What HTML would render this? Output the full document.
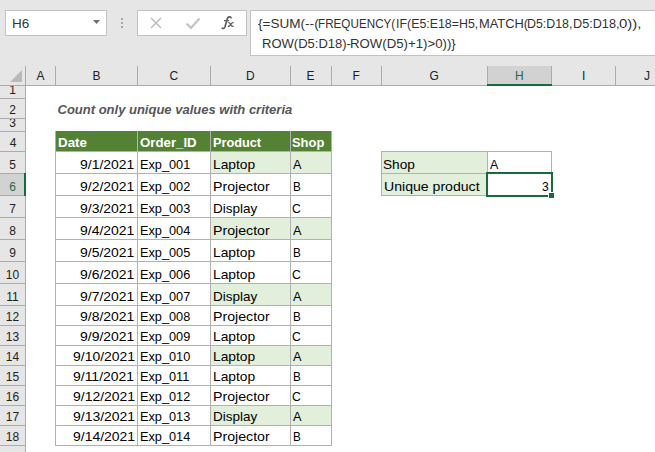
<!DOCTYPE html>
<html><head><meta charset="utf-8"><style>
html,body{margin:0;padding:0;width:655px;height:452px;overflow:hidden;background:#fff;}
body{position:relative;font-family:"Liberation Sans",sans-serif;}
.t{position:absolute;white-space:pre;line-height:1;font-family:"Liberation Sans",sans-serif;}
</style></head><body>
<div style="position:absolute;left:0px;top:0px;width:655px;height:86px;background:#e6e6e6;"></div>
<div style="position:absolute;left:0px;top:86px;width:26px;height:366px;background:#e6e6e6;"></div>
<div style="position:absolute;left:5px;top:10px;width:102px;height:26px;background:#fff;border:1px solid #c2c2c2;box-sizing:border-box;"></div>
<svg style="position:absolute;left:0px;top:0px" width="120" height="40"><path d="M93 20 L100 20 L96.5 24 Z" fill="#6f6f6f"/></svg>
<div style="position:absolute;left:121px;top:18px;width:2px;height:2px;background:#a9a9a9;"></div>
<div style="position:absolute;left:121px;top:22px;width:2px;height:2px;background:#a9a9a9;"></div>
<div style="position:absolute;left:121px;top:26px;width:2px;height:2px;background:#a9a9a9;"></div>
<div style="position:absolute;left:137px;top:10px;width:110px;height:26px;background:#fff;border:1px solid #c2c2c2;box-sizing:border-box;"></div>
<svg style="position:absolute;left:148px;top:15px" width="16" height="16"><path d="M3 3 L13 13 M13 3 L3 13" stroke="#bdbdbd" stroke-width="1.5"/></svg>
<svg style="position:absolute;left:184px;top:15px" width="18" height="16"><path d="M2.5 8.5 L7 13 L15.5 3.5" stroke="#c4c4c4" stroke-width="2.2" fill="none"/></svg>
<svg style="position:absolute;left:0px;top:0px" width="250" height="40"><path d="M231 17.6 C230 16.4 228 16.6 227.3 18.8 L225 26.8 C224.5 28.4 223.5 28.9 222.3 28.2" stroke="#5c5c5c" stroke-width="1.7" fill="none" stroke-linecap="round"/><path d="M224 20.7 L229.2 20.7" stroke="#5c5c5c" stroke-width="1.2"/><path d="M228.2 22.6 C229.5 22.2 230 23.5 230.6 24.6 C231.2 25.8 232 26.6 233.6 26.2 M233.6 22.4 C232.5 22.6 231 24 230.6 24.6 C230 25.5 229 26.6 227.8 26.5" stroke="#5c5c5c" stroke-width="1.3" fill="none"/></svg>
<div style="position:absolute;left:250px;top:10px;width:420px;height:46px;background:#fff;border:1px solid #c2c2c2;box-sizing:border-box;"></div>
<div style="position:absolute;left:25px;top:66px;width:1px;height:19px;background:#ababab;"></div>
<div style="position:absolute;left:55px;top:66px;width:1px;height:19px;background:#ababab;"></div>
<div style="position:absolute;left:137px;top:66px;width:1px;height:19px;background:#ababab;"></div>
<div style="position:absolute;left:210px;top:66px;width:1px;height:19px;background:#ababab;"></div>
<div style="position:absolute;left:290px;top:66px;width:1px;height:19px;background:#ababab;"></div>
<div style="position:absolute;left:331px;top:66px;width:1px;height:19px;background:#ababab;"></div>
<div style="position:absolute;left:381px;top:66px;width:1px;height:19px;background:#ababab;"></div>
<div style="position:absolute;left:487px;top:66px;width:1px;height:19px;background:#ababab;"></div>
<div style="position:absolute;left:551px;top:66px;width:1px;height:19px;background:#ababab;"></div>
<div style="position:absolute;left:615px;top:66px;width:1px;height:19px;background:#ababab;"></div>
<div style="position:absolute;left:488px;top:66px;width:63px;height:18px;background:#d2d2d2;"></div>
<div style="position:absolute;left:0px;top:85px;width:655px;height:1px;background:#ababab;"></div>
<div style="position:absolute;left:487px;top:84px;width:65px;height:2px;background:#166b3a;"></div>
<div style="position:absolute;left:25px;top:85px;width:1px;height:367px;background:#ababab;"></div>
<div style="position:absolute;left:0px;top:98px;width:25px;height:1px;background:#ababab;"></div>
<div style="position:absolute;left:0px;top:118px;width:25px;height:1px;background:#ababab;"></div>
<div style="position:absolute;left:0px;top:131px;width:25px;height:1px;background:#ababab;"></div>
<div style="position:absolute;left:0px;top:151px;width:25px;height:1px;background:#ababab;"></div>
<div style="position:absolute;left:0px;top:173px;width:25px;height:1px;background:#ababab;"></div>
<div style="position:absolute;left:0px;top:195px;width:25px;height:1px;background:#ababab;"></div>
<div style="position:absolute;left:0px;top:217px;width:25px;height:1px;background:#ababab;"></div>
<div style="position:absolute;left:0px;top:239px;width:25px;height:1px;background:#ababab;"></div>
<div style="position:absolute;left:0px;top:261px;width:25px;height:1px;background:#ababab;"></div>
<div style="position:absolute;left:0px;top:283px;width:25px;height:1px;background:#ababab;"></div>
<div style="position:absolute;left:0px;top:305px;width:25px;height:1px;background:#ababab;"></div>
<div style="position:absolute;left:0px;top:325px;width:25px;height:1px;background:#ababab;"></div>
<div style="position:absolute;left:0px;top:345px;width:25px;height:1px;background:#ababab;"></div>
<div style="position:absolute;left:0px;top:365px;width:25px;height:1px;background:#ababab;"></div>
<div style="position:absolute;left:0px;top:385px;width:25px;height:1px;background:#ababab;"></div>
<div style="position:absolute;left:0px;top:405px;width:25px;height:1px;background:#ababab;"></div>
<div style="position:absolute;left:0px;top:425px;width:25px;height:1px;background:#ababab;"></div>
<div style="position:absolute;left:0px;top:445px;width:25px;height:1px;background:#ababab;"></div>
<div style="position:absolute;left:0px;top:174px;width:24px;height:21px;background:#d2d2d2;"></div>
<div style="position:absolute;left:24px;top:173px;width:2px;height:23px;background:#166b3a;"></div>
<svg style="position:absolute;left:10px;top:70px" width="13" height="13"><path d="M12 0 L12 12 L0 12 Z" fill="#b9b9b9"/></svg>
<div style="position:absolute;left:26px;top:86px;width:629px;height:366px;background:#fff;"></div>
<div style="position:absolute;left:56px;top:131px;width:275px;height:20px;background:#548235;"></div>
<div style="position:absolute;left:211px;top:152px;width:120px;height:21px;background:#e2efda;"></div>
<div style="position:absolute;left:211px;top:218px;width:120px;height:21px;background:#e2efda;"></div>
<div style="position:absolute;left:211px;top:284px;width:120px;height:21px;background:#e2efda;"></div>
<div style="position:absolute;left:211px;top:346px;width:120px;height:19px;background:#e2efda;"></div>
<div style="position:absolute;left:211px;top:406px;width:120px;height:19px;background:#e2efda;"></div>
<div style="position:absolute;left:55px;top:131px;width:1px;height:315px;background:#b1b1b1;"></div>
<div style="position:absolute;left:137px;top:131px;width:1px;height:315px;background:#b1b1b1;"></div>
<div style="position:absolute;left:210px;top:131px;width:1px;height:315px;background:#b1b1b1;"></div>
<div style="position:absolute;left:290px;top:131px;width:1px;height:315px;background:#b1b1b1;"></div>
<div style="position:absolute;left:331px;top:131px;width:1px;height:315px;background:#b1b1b1;"></div>
<div style="position:absolute;left:55px;top:151px;width:277px;height:1px;background:#b1b1b1;"></div>
<div style="position:absolute;left:55px;top:173px;width:277px;height:1px;background:#b1b1b1;"></div>
<div style="position:absolute;left:55px;top:195px;width:277px;height:1px;background:#b1b1b1;"></div>
<div style="position:absolute;left:55px;top:217px;width:277px;height:1px;background:#b1b1b1;"></div>
<div style="position:absolute;left:55px;top:239px;width:277px;height:1px;background:#b1b1b1;"></div>
<div style="position:absolute;left:55px;top:261px;width:277px;height:1px;background:#b1b1b1;"></div>
<div style="position:absolute;left:55px;top:283px;width:277px;height:1px;background:#b1b1b1;"></div>
<div style="position:absolute;left:55px;top:305px;width:277px;height:1px;background:#b1b1b1;"></div>
<div style="position:absolute;left:55px;top:325px;width:277px;height:1px;background:#b1b1b1;"></div>
<div style="position:absolute;left:55px;top:345px;width:277px;height:1px;background:#b1b1b1;"></div>
<div style="position:absolute;left:55px;top:365px;width:277px;height:1px;background:#b1b1b1;"></div>
<div style="position:absolute;left:55px;top:385px;width:277px;height:1px;background:#b1b1b1;"></div>
<div style="position:absolute;left:55px;top:405px;width:277px;height:1px;background:#b1b1b1;"></div>
<div style="position:absolute;left:55px;top:425px;width:277px;height:1px;background:#b1b1b1;"></div>
<div style="position:absolute;left:55px;top:445px;width:277px;height:1px;background:#b1b1b1;"></div>
<div style="position:absolute;left:382px;top:152px;width:105px;height:43px;background:#e2efda;"></div>
<div style="position:absolute;left:381px;top:151px;width:1px;height:45px;background:#b1b1b1;"></div>
<div style="position:absolute;left:487px;top:151px;width:1px;height:45px;background:#b1b1b1;"></div>
<div style="position:absolute;left:551px;top:151px;width:1px;height:45px;background:#b1b1b1;"></div>
<div style="position:absolute;left:381px;top:151px;width:171px;height:1px;background:#b1b1b1;"></div>
<div style="position:absolute;left:381px;top:173px;width:171px;height:1px;background:#b1b1b1;"></div>
<div style="position:absolute;left:381px;top:195px;width:171px;height:1px;background:#b1b1b1;"></div>
<div style="position:absolute;left:486px;top:172px;width:67px;height:25px;border:2px solid #166b3a;box-sizing:border-box;"></div>
<div style="position:absolute;left:548px;top:192px;width:7px;height:7px;background:#fff;"></div>
<div style="position:absolute;left:549px;top:193px;width:5px;height:5px;background:#166b3a;"></div>
<div class="t" style="left:11.82px;top:18.21px;font-size:12.5px;transform:scaleX(1.0786);transform-origin:0 0;color:#333;">H6</div>
<div class="t" style="left:257.50px;top:16.99px;font-size:13px;transform:scaleX(1.0431);transform-origin:0 0;color:#333;">{=SUM(--(</div>
<div class="t" style="left:317.60px;top:16.99px;font-size:13px;transform:scaleX(0.8988);transform-origin:0 0;color:#333;">FREQUENCY(</div>
<div class="t" style="left:395.55px;top:16.99px;font-size:13px;transform:scaleX(0.9524);transform-origin:0 0;color:#333;">IF(E5:E18=H5,</div>
<div class="t" style="left:478.51px;top:16.99px;font-size:13px;transform:scaleX(0.9896);transform-origin:0 0;color:#333;">MATCH(</div>
<div class="t" style="left:527.25px;top:16.99px;font-size:13px;transform:scaleX(0.9522);transform-origin:0 0;color:#333;">D5:D18,</div>
<div class="t" style="left:573.03px;top:16.99px;font-size:13px;transform:scaleX(0.9739);transform-origin:0 0;color:#333;">D5:D18,</div>
<div class="t" style="left:618.65px;top:16.99px;font-size:13px;transform:scaleX(1.1500);transform-origin:0 0;color:#333;">0)),</div>
<div class="t" style="left:261.90px;top:36.99px;font-size:13px;transform:scaleX(1.0011);transform-origin:0 0;color:#333;">ROW(D5:D18)-</div>
<div class="t" style="left:349.88px;top:36.99px;font-size:13px;transform:scaleX(1.0165);transform-origin:0 0;color:#333;">ROW(D5)+1)&gt;0))}</div>
<div class="t" style="left:57.50px;top:102.99px;font-size:13px;transform:scaleX(1.0000);transform-origin:0 0;color:#555659;font-weight:bold;font-style:italic;">Count only unique values with criteria</div>
<div class="t" style="left:57.77px;top:135.99px;font-size:13px;transform:scaleX(1.0296);transform-origin:0 0;color:#fff;font-weight:bold;">Date</div>
<div class="t" style="left:140.00px;top:135.99px;font-size:13px;transform:scaleX(1.0182);transform-origin:0 0;color:#fff;font-weight:bold;">Order_ID</div>
<div class="t" style="left:213.32px;top:135.99px;font-size:13px;transform:scaleX(0.9792);transform-origin:0 0;color:#fff;font-weight:bold;">Product</div>
<div class="t" style="left:291.91px;top:135.99px;font-size:13px;transform:scaleX(0.9935);transform-origin:0 0;color:#fff;font-weight:bold;">Shop</div>
<div class="t" style="left:80.43px;top:157.99px;font-size:13px;transform:scaleX(1.0735);transform-origin:0 0;color:#000;">9/1/2021</div>
<div class="t" style="left:139.52px;top:157.99px;font-size:13px;transform:scaleX(0.9800);transform-origin:0 0;color:#000;">Exp_001</div>
<div class="t" style="left:212.94px;top:157.99px;font-size:13px;transform:scaleX(1.0605);transform-origin:0 0;color:#000;">Laptop</div>
<div class="t" style="left:293.20px;top:157.99px;font-size:13px;transform:scaleX(0.9778);transform-origin:0 0;color:#000;">A</div>
<div class="t" style="left:80.43px;top:179.99px;font-size:13px;transform:scaleX(1.0735);transform-origin:0 0;color:#000;">9/2/2021</div>
<div class="t" style="left:139.52px;top:179.99px;font-size:13px;transform:scaleX(0.9800);transform-origin:0 0;color:#000;">Exp_002</div>
<div class="t" style="left:212.91px;top:179.99px;font-size:13px;transform:scaleX(1.0902);transform-origin:0 0;color:#000;">Projector</div>
<div class="t" style="left:293.10px;top:179.99px;font-size:13px;transform:scaleX(0.9000);transform-origin:0 0;color:#000;">B</div>
<div class="t" style="left:80.43px;top:201.99px;font-size:13px;transform:scaleX(1.0735);transform-origin:0 0;color:#000;">9/3/2021</div>
<div class="t" style="left:139.52px;top:201.99px;font-size:13px;transform:scaleX(0.9800);transform-origin:0 0;color:#000;">Exp_003</div>
<div class="t" style="left:212.96px;top:201.99px;font-size:13px;transform:scaleX(1.0405);transform-origin:0 0;color:#000;">Display</div>
<div class="t" style="left:292.36px;top:201.99px;font-size:13px;transform:scaleX(0.9375);transform-origin:0 0;color:#000;">C</div>
<div class="t" style="left:80.43px;top:223.99px;font-size:13px;transform:scaleX(1.0735);transform-origin:0 0;color:#000;">9/4/2021</div>
<div class="t" style="left:139.52px;top:223.99px;font-size:13px;transform:scaleX(0.9800);transform-origin:0 0;color:#000;">Exp_004</div>
<div class="t" style="left:212.91px;top:223.99px;font-size:13px;transform:scaleX(1.0902);transform-origin:0 0;color:#000;">Projector</div>
<div class="t" style="left:293.20px;top:223.99px;font-size:13px;transform:scaleX(0.9778);transform-origin:0 0;color:#000;">A</div>
<div class="t" style="left:80.43px;top:245.99px;font-size:13px;transform:scaleX(1.0735);transform-origin:0 0;color:#000;">9/5/2021</div>
<div class="t" style="left:139.52px;top:245.99px;font-size:13px;transform:scaleX(0.9800);transform-origin:0 0;color:#000;">Exp_005</div>
<div class="t" style="left:212.94px;top:245.99px;font-size:13px;transform:scaleX(1.0605);transform-origin:0 0;color:#000;">Laptop</div>
<div class="t" style="left:293.10px;top:245.99px;font-size:13px;transform:scaleX(0.9000);transform-origin:0 0;color:#000;">B</div>
<div class="t" style="left:80.43px;top:267.99px;font-size:13px;transform:scaleX(1.0735);transform-origin:0 0;color:#000;">9/6/2021</div>
<div class="t" style="left:139.52px;top:267.99px;font-size:13px;transform:scaleX(0.9800);transform-origin:0 0;color:#000;">Exp_006</div>
<div class="t" style="left:212.94px;top:267.99px;font-size:13px;transform:scaleX(1.0605);transform-origin:0 0;color:#000;">Laptop</div>
<div class="t" style="left:292.36px;top:267.99px;font-size:13px;transform:scaleX(0.9375);transform-origin:0 0;color:#000;">C</div>
<div class="t" style="left:80.43px;top:289.99px;font-size:13px;transform:scaleX(1.0735);transform-origin:0 0;color:#000;">9/7/2021</div>
<div class="t" style="left:139.52px;top:289.99px;font-size:13px;transform:scaleX(0.9800);transform-origin:0 0;color:#000;">Exp_007</div>
<div class="t" style="left:212.96px;top:289.99px;font-size:13px;transform:scaleX(1.0405);transform-origin:0 0;color:#000;">Display</div>
<div class="t" style="left:293.20px;top:289.99px;font-size:13px;transform:scaleX(0.9778);transform-origin:0 0;color:#000;">A</div>
<div class="t" style="left:80.43px;top:309.99px;font-size:13px;transform:scaleX(1.0735);transform-origin:0 0;color:#000;">9/8/2021</div>
<div class="t" style="left:139.52px;top:309.99px;font-size:13px;transform:scaleX(0.9800);transform-origin:0 0;color:#000;">Exp_008</div>
<div class="t" style="left:212.91px;top:309.99px;font-size:13px;transform:scaleX(1.0902);transform-origin:0 0;color:#000;">Projector</div>
<div class="t" style="left:293.10px;top:309.99px;font-size:13px;transform:scaleX(0.9000);transform-origin:0 0;color:#000;">B</div>
<div class="t" style="left:80.43px;top:329.99px;font-size:13px;transform:scaleX(1.0735);transform-origin:0 0;color:#000;">9/9/2021</div>
<div class="t" style="left:139.52px;top:329.99px;font-size:13px;transform:scaleX(0.9800);transform-origin:0 0;color:#000;">Exp_009</div>
<div class="t" style="left:212.94px;top:329.99px;font-size:13px;transform:scaleX(1.0605);transform-origin:0 0;color:#000;">Laptop</div>
<div class="t" style="left:292.36px;top:329.99px;font-size:13px;transform:scaleX(0.9375);transform-origin:0 0;color:#000;">C</div>
<div class="t" style="left:72.91px;top:349.99px;font-size:13px;transform:scaleX(1.0735);transform-origin:0 0;color:#000;">9/10/2021</div>
<div class="t" style="left:139.52px;top:349.99px;font-size:13px;transform:scaleX(0.9800);transform-origin:0 0;color:#000;">Exp_010</div>
<div class="t" style="left:212.94px;top:349.99px;font-size:13px;transform:scaleX(1.0605);transform-origin:0 0;color:#000;">Laptop</div>
<div class="t" style="left:293.20px;top:349.99px;font-size:13px;transform:scaleX(0.9778);transform-origin:0 0;color:#000;">A</div>
<div class="t" style="left:72.91px;top:369.99px;font-size:13px;transform:scaleX(1.0735);transform-origin:0 0;color:#000;">9/11/2021</div>
<div class="t" style="left:139.52px;top:369.99px;font-size:13px;transform:scaleX(0.9800);transform-origin:0 0;color:#000;">Exp_011</div>
<div class="t" style="left:212.94px;top:369.99px;font-size:13px;transform:scaleX(1.0605);transform-origin:0 0;color:#000;">Laptop</div>
<div class="t" style="left:293.10px;top:369.99px;font-size:13px;transform:scaleX(0.9000);transform-origin:0 0;color:#000;">B</div>
<div class="t" style="left:72.91px;top:389.99px;font-size:13px;transform:scaleX(1.0735);transform-origin:0 0;color:#000;">9/12/2021</div>
<div class="t" style="left:139.52px;top:389.99px;font-size:13px;transform:scaleX(0.9800);transform-origin:0 0;color:#000;">Exp_012</div>
<div class="t" style="left:212.91px;top:389.99px;font-size:13px;transform:scaleX(1.0902);transform-origin:0 0;color:#000;">Projector</div>
<div class="t" style="left:292.36px;top:389.99px;font-size:13px;transform:scaleX(0.9375);transform-origin:0 0;color:#000;">C</div>
<div class="t" style="left:72.91px;top:409.99px;font-size:13px;transform:scaleX(1.0735);transform-origin:0 0;color:#000;">9/13/2021</div>
<div class="t" style="left:139.52px;top:409.99px;font-size:13px;transform:scaleX(0.9800);transform-origin:0 0;color:#000;">Exp_013</div>
<div class="t" style="left:212.96px;top:409.99px;font-size:13px;transform:scaleX(1.0405);transform-origin:0 0;color:#000;">Display</div>
<div class="t" style="left:293.20px;top:409.99px;font-size:13px;transform:scaleX(0.9778);transform-origin:0 0;color:#000;">A</div>
<div class="t" style="left:72.91px;top:429.99px;font-size:13px;transform:scaleX(1.0735);transform-origin:0 0;color:#000;">9/14/2021</div>
<div class="t" style="left:139.52px;top:429.99px;font-size:13px;transform:scaleX(0.9800);transform-origin:0 0;color:#000;">Exp_014</div>
<div class="t" style="left:212.91px;top:429.99px;font-size:13px;transform:scaleX(1.0902);transform-origin:0 0;color:#000;">Projector</div>
<div class="t" style="left:293.10px;top:429.99px;font-size:13px;transform:scaleX(0.9000);transform-origin:0 0;color:#000;">B</div>
<div class="t" style="left:382.95px;top:157.99px;font-size:13px;transform:scaleX(1.0517);transform-origin:0 0;color:#000;">Shop</div>
<div class="t" style="left:383.62px;top:179.99px;font-size:13px;transform:scaleX(1.0839);transform-origin:0 0;color:#000;">Unique product</div>
<div class="t" style="left:490.00px;top:157.99px;font-size:13px;transform:scaleX(0.9556);transform-origin:0 0;color:#000;">A</div>
<div class="t" style="left:541.77px;top:179.99px;font-size:13px;transform:scaleX(0.9333);transform-origin:0 0;color:#000;">3</div>
<div class="t" style="left:36.50px;top:69.84px;font-size:12px;transform:scaleX(1.0000);transform-origin:0 0;color:#222;">A</div>
<div class="t" style="left:92.50px;top:69.84px;font-size:12px;transform:scaleX(1.0000);transform-origin:0 0;color:#222;">B</div>
<div class="t" style="left:169.50px;top:69.84px;font-size:12px;transform:scaleX(1.0000);transform-origin:0 0;color:#222;">C</div>
<div class="t" style="left:246.00px;top:69.84px;font-size:12px;transform:scaleX(1.0000);transform-origin:0 0;color:#222;">D</div>
<div class="t" style="left:306.50px;top:69.84px;font-size:12px;transform:scaleX(1.0000);transform-origin:0 0;color:#222;">E</div>
<div class="t" style="left:352.50px;top:69.84px;font-size:12px;transform:scaleX(1.0000);transform-origin:0 0;color:#222;">F</div>
<div class="t" style="left:429.50px;top:69.84px;font-size:12px;transform:scaleX(1.0000);transform-origin:0 0;color:#222;">G</div>
<div class="t" style="left:515.00px;top:69.84px;font-size:12px;transform:scaleX(1.0000);transform-origin:0 0;color:#1e6b41;">H</div>
<div class="t" style="left:582.00px;top:69.84px;font-size:12px;transform:scaleX(1.0000);transform-origin:0 0;color:#222;">I</div>
<div class="t" style="left:644.00px;top:69.84px;font-size:12px;transform:scaleX(1.0000);transform-origin:0 0;color:#222;">J</div>
<div style="position:absolute;left:0;top:86px;width:25px;height:12px;overflow:hidden;"><div class="t" style="left:9.30px;top:-2.16px;font-size:12px;transform:scaleX(1.0000);transform-origin:0 0;color:#222;">1</div></div>
<div style="position:absolute;left:0;top:99px;width:25px;height:19px;overflow:hidden;"><div class="t" style="left:9.30px;top:4.84px;font-size:12px;transform:scaleX(1.0000);transform-origin:0 0;color:#222;">2</div></div>
<div style="position:absolute;left:0;top:119px;width:25px;height:12px;overflow:hidden;"><div class="t" style="left:9.30px;top:-2.16px;font-size:12px;transform:scaleX(1.0000);transform-origin:0 0;color:#222;">3</div></div>
<div style="position:absolute;left:0;top:132px;width:25px;height:19px;overflow:hidden;"><div class="t" style="left:9.80px;top:4.84px;font-size:12px;transform:scaleX(1.0000);transform-origin:0 0;color:#222;">4</div></div>
<div style="position:absolute;left:0;top:152px;width:25px;height:21px;overflow:hidden;"><div class="t" style="left:9.30px;top:6.84px;font-size:12px;transform:scaleX(1.0000);transform-origin:0 0;color:#222;">5</div></div>
<div style="position:absolute;left:0;top:174px;width:25px;height:21px;overflow:hidden;"><div class="t" style="left:9.30px;top:6.84px;font-size:12px;transform:scaleX(1.0000);transform-origin:0 0;color:#1e6b41;">6</div></div>
<div style="position:absolute;left:0;top:196px;width:25px;height:21px;overflow:hidden;"><div class="t" style="left:9.30px;top:6.84px;font-size:12px;transform:scaleX(1.0000);transform-origin:0 0;color:#222;">7</div></div>
<div style="position:absolute;left:0;top:218px;width:25px;height:21px;overflow:hidden;"><div class="t" style="left:9.30px;top:6.84px;font-size:12px;transform:scaleX(1.0000);transform-origin:0 0;color:#222;">8</div></div>
<div style="position:absolute;left:0;top:240px;width:25px;height:21px;overflow:hidden;"><div class="t" style="left:9.30px;top:6.84px;font-size:12px;transform:scaleX(1.0000);transform-origin:0 0;color:#222;">9</div></div>
<div style="position:absolute;left:0;top:262px;width:25px;height:21px;overflow:hidden;"><div class="t" style="left:5.80px;top:6.84px;font-size:12px;transform:scaleX(1.0000);transform-origin:0 0;color:#222;">10</div></div>
<div style="position:absolute;left:0;top:284px;width:25px;height:21px;overflow:hidden;"><div class="t" style="left:6.30px;top:6.84px;font-size:12px;transform:scaleX(1.0000);transform-origin:0 0;color:#222;">11</div></div>
<div style="position:absolute;left:0;top:306px;width:25px;height:19px;overflow:hidden;"><div class="t" style="left:5.80px;top:4.84px;font-size:12px;transform:scaleX(1.0000);transform-origin:0 0;color:#222;">12</div></div>
<div style="position:absolute;left:0;top:326px;width:25px;height:19px;overflow:hidden;"><div class="t" style="left:5.80px;top:4.84px;font-size:12px;transform:scaleX(1.0000);transform-origin:0 0;color:#222;">13</div></div>
<div style="position:absolute;left:0;top:346px;width:25px;height:19px;overflow:hidden;"><div class="t" style="left:5.80px;top:4.84px;font-size:12px;transform:scaleX(1.0000);transform-origin:0 0;color:#222;">14</div></div>
<div style="position:absolute;left:0;top:366px;width:25px;height:19px;overflow:hidden;"><div class="t" style="left:5.80px;top:4.84px;font-size:12px;transform:scaleX(1.0000);transform-origin:0 0;color:#222;">15</div></div>
<div style="position:absolute;left:0;top:386px;width:25px;height:19px;overflow:hidden;"><div class="t" style="left:5.80px;top:4.84px;font-size:12px;transform:scaleX(1.0000);transform-origin:0 0;color:#222;">16</div></div>
<div style="position:absolute;left:0;top:406px;width:25px;height:19px;overflow:hidden;"><div class="t" style="left:5.80px;top:4.84px;font-size:12px;transform:scaleX(1.0000);transform-origin:0 0;color:#222;">17</div></div>
<div style="position:absolute;left:0;top:426px;width:25px;height:19px;overflow:hidden;"><div class="t" style="left:5.80px;top:4.84px;font-size:12px;transform:scaleX(1.0000);transform-origin:0 0;color:#222;">18</div></div>
</body></html>
